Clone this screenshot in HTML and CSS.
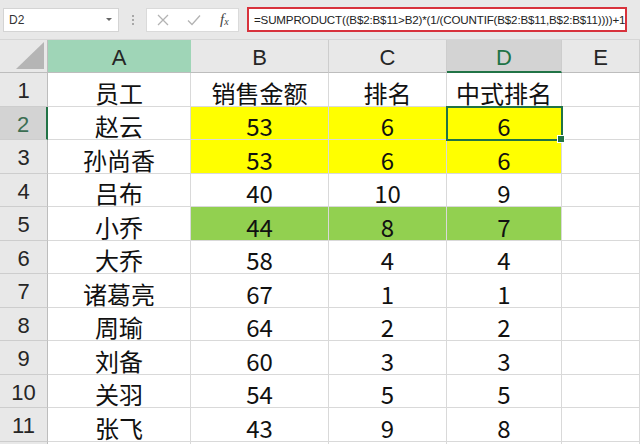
FILE: index.html
```html
<!DOCTYPE html>
<html>
<head>
  <title>中式排名</title>
  <link rel="stylesheet" href="styles.css">
</head>
<body>

  <div class="toolbar">
    <div class="namebox">
      <span>D2</span>
      <span class="caret"></span>
    </div>
    <div class="grip"><i></i><i></i><i></i></div>
    <div class="fxbox">
      <svg class="ico" width="14" height="14" viewBox="0 0 14 14"><path d="M2 2 L12 12 M12 2 L2 12" stroke="#b3b3b3" stroke-width="1.3" fill="none"/></svg>
      <svg class="ico" width="16" height="14" viewBox="0 0 16 14"><path d="M2 7.5 L6 11.5 L14 2.5" stroke="#b3b3b3" stroke-width="1.3" fill="none"/></svg>
      <span class="fx">f<sub>x</sub></span>
    </div>
    <div class="formula">=SUMPRODUCT((B$2:B$11&gt;B2)*(1/(COUNTIF(B$2:B$11,B$2:B$11))))+1</div>
  </div>

  <div class="sheet">
    <div class="hd corner"><span class="tri"></span></div>
    <div class="hd col col-a">A</div>
    <div class="hd col">B</div>
    <div class="hd col">C</div>
    <div class="hd col col-sel">D</div>
    <div class="hd col">E</div>

    <div class="hd row">1</div>
    <div class="c">员工</div><div class="c">销售金额</div><div class="c">排名</div><div class="c">中式排名</div><div class="c"></div>

    <div class="hd row row-sel">2</div>
    <div class="c">赵云</div><div class="c yellow">53</div><div class="c yellow">6</div><div class="c yellow active">6</div><div class="c"></div>

    <div class="hd row">3</div>
    <div class="c">孙尚香</div><div class="c yellow">53</div><div class="c yellow">6</div><div class="c yellow">6</div><div class="c"></div>

    <div class="hd row">4</div>
    <div class="c">吕布</div><div class="c">40</div><div class="c">10</div><div class="c">9</div><div class="c"></div>

    <div class="hd row">5</div>
    <div class="c">小乔</div><div class="c green">44</div><div class="c green">8</div><div class="c green">7</div><div class="c"></div>

    <div class="hd row">6</div>
    <div class="c">大乔</div><div class="c">58</div><div class="c">4</div><div class="c">4</div><div class="c"></div>

    <div class="hd row">7</div>
    <div class="c">诸葛亮</div><div class="c">67</div><div class="c">1</div><div class="c">1</div><div class="c"></div>

    <div class="hd row">8</div>
    <div class="c">周瑜</div><div class="c">64</div><div class="c">2</div><div class="c">2</div><div class="c"></div>

    <div class="hd row">9</div>
    <div class="c">刘备</div><div class="c">60</div><div class="c">3</div><div class="c">3</div><div class="c"></div>

    <div class="hd row">10</div>
    <div class="c">关羽</div><div class="c">54</div><div class="c">5</div><div class="c">5</div><div class="c"></div>

    <div class="hd row">11</div>
    <div class="c">张飞</div><div class="c">43</div><div class="c">9</div><div class="c">8</div><div class="c"></div>

    <div class="hd row"></div>
    <div class="c"></div><div class="c"></div><div class="c"></div><div class="c"></div><div class="c"></div>
  </div>

</body>
</html>
```

FILE: styles.css
```css
body {
  margin: 0;
  width: 640px;
  height: 444px;
  overflow: hidden;
  background-color: #fff;
  font-family: "Noto Sans CJK SC", "Liberation Sans", sans-serif;
  color: #1a1a1a;
}

.toolbar {
  display: flex;
  align-items: center;
  height: 40px;
  padding-left: 3px;
  background-color: #e8e8e8;
  border-bottom: 1px solid #d6d6d6;
  box-sizing: border-box;
}

.namebox {
  display: flex;
  align-items: center;
  justify-content: space-between;
  width: 116px;
  height: 24px;
  padding: 0 6px 0 5px;
  box-sizing: border-box;
  background-color: #fff;
  border: 1px solid #d4d4d4;
  font-family: "Liberation Sans", Arial, sans-serif;
  font-size: 12px;
  color: #333;
}

.caret {
  width: 0;
  height: 0;
  border-left: 3px solid transparent;
  border-right: 3px solid transparent;
  border-top: 3px solid #666;
}

.grip {
  display: flex;
  flex-direction: column;
  gap: 2px;
  margin: 0 12px 0 13px;
}

.grip i {
  display: block;
  width: 2px;
  height: 2px;
  background-color: #a8a8a8;
}

.fxbox {
  display: flex;
  align-items: center;
  width: 93px;
  height: 24px;
  box-sizing: border-box;
  background-color: #fff;
  border: 1px solid #dadada;
  padding-left: 9px;
}

.ico {
  margin-right: 16px;
}

.fx {
  margin-left: 2px;
  font-family: "Liberation Serif", serif;
  font-style: italic;
  font-size: 15px;
  color: #444;
}

.fx sub {
  font-size: 10px;
  vertical-align: -1px;
}

.formula {
  flex: none;
  width: 380px;
  height: 25px;
  margin-left: 8px;
  box-sizing: border-box;
  padding-left: 5px;
  border: 2px solid #d8323c;
  background-color: #fff;
  font-family: "Liberation Sans", Arial, sans-serif;
  font-size: 11.6px;
  letter-spacing: -0.17px;
  line-height: 21px;
  white-space: nowrap;
  overflow: hidden;
  color: #222;
}

.sheet {
  display: grid;
  grid-template-columns: 48px 143px 138px 118px 115px 78px;
  grid-template-rows: 33px repeat(12, 33.5px);
}

.hd {
  display: flex;
  align-items: center;
  justify-content: center;
  background-color: #e8e8e8;
  font-family: "Liberation Sans", "Noto Sans", sans-serif;
  font-size: 22px;
  color: #262626;
  box-sizing: border-box;
  padding-top: 4px;
}

.col {
  border-right: 1px solid #cdcdcd;
  border-bottom: 1px solid #bdbdbd;
}

.col-a {
  background-color: #9fd5b7;
  border-right-color: #9fd5b7;
}

.col-sel {
  background-color: #d3d3d3;
  border-bottom: 2px solid #217346;
  color: #217346;
}

.row {
  border-right: 1px solid #bdbdbd;
  border-bottom: 1px solid #cdcdcd;
}

.row-sel {
  background-color: #d3d3d3;
  border-right: 2px solid #217346;
  color: #3b6e52;
}

.corner {
  position: relative;
  border-right: 1px solid #bdbdbd;
  border-bottom: 1px solid #bdbdbd;
}

.tri {
  position: absolute;
  right: 3px;
  bottom: 3px;
  width: 0;
  height: 0;
  border-left: 28px solid transparent;
  border-bottom: 27px solid #b5b5b5;
}

.c {
  display: flex;
  align-items: center;
  justify-content: center;
  box-sizing: border-box;
  padding-top: 6px;
  border-right: 1px solid #d9d9d9;
  border-bottom: 1px solid #d9d9d9;
  font-size: 24px;
  color: #111;
  white-space: nowrap;
}

.yellow {
  background-color: #ffff00;
}

.green {
  background-color: #92d050;
}

.active {
  position: relative;
  outline: 2px solid #217346;
  outline-offset: -1px;
}

.active::after {
  content: "";
  position: absolute;
  right: -4px;
  bottom: -4px;
  width: 6px;
  height: 6px;
  background-color: #217346;
  border: 1px solid #fff;
}
```
